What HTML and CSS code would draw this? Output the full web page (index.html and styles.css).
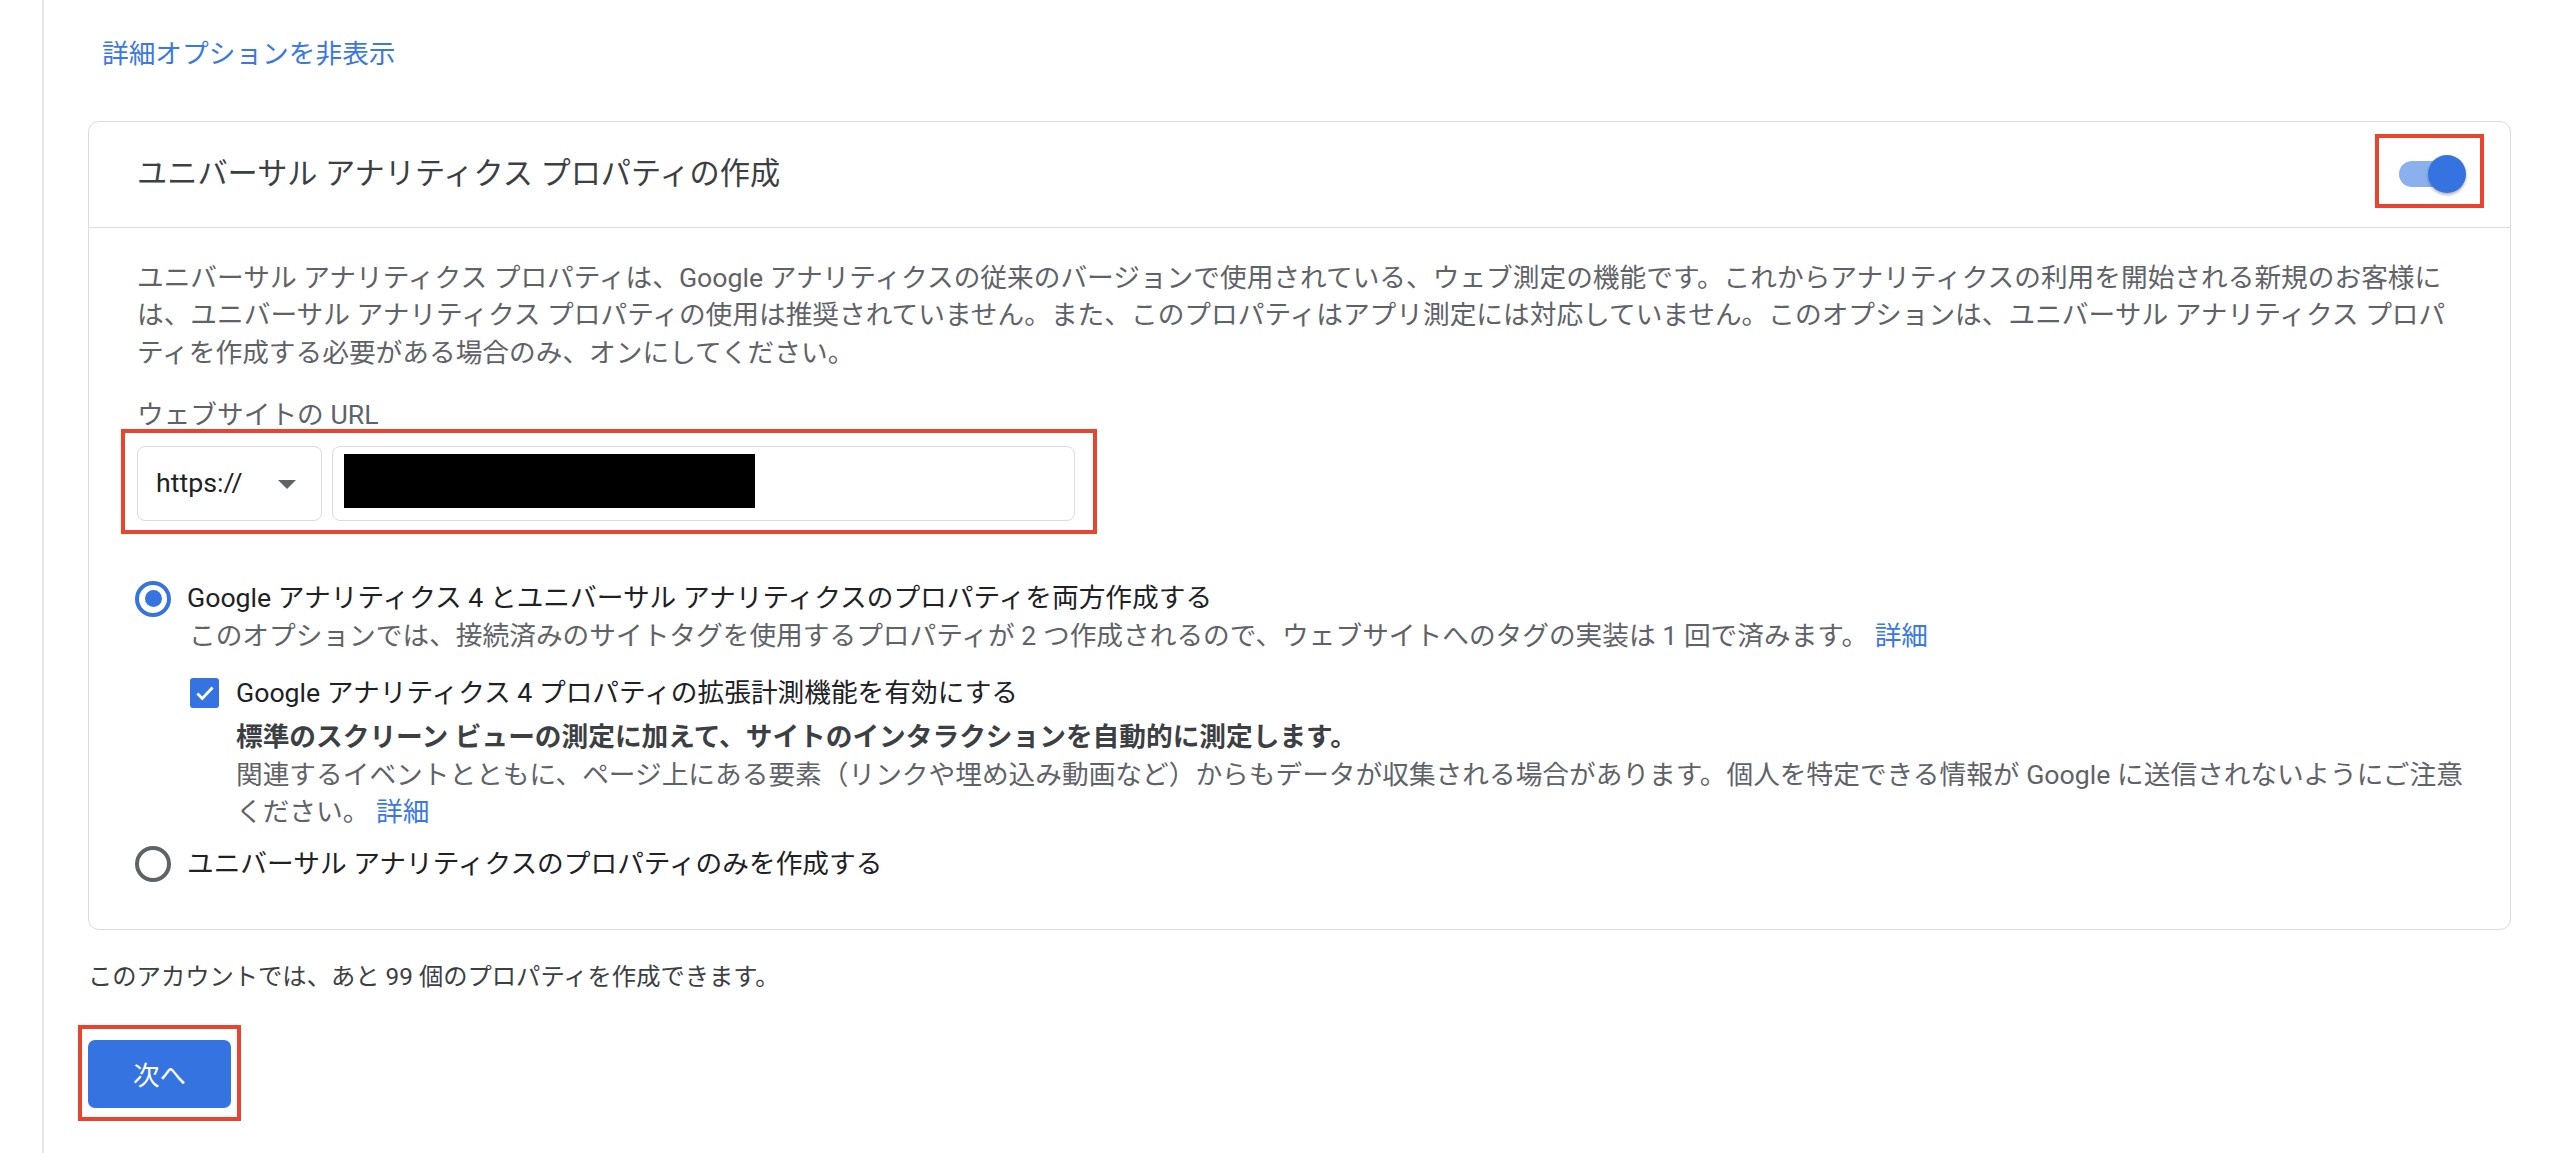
FILE: index.html
```html
<!DOCTYPE html>
<html lang="ja">
<head>
<meta charset="utf-8">
<title>プロパティの作成</title>
<link rel="stylesheet" href="styles.css">
</head>
<body>
<div class="page">
  <div class="toplink"><a class="link">詳細オプションを非表示</a></div>

  <div class="card">
    <div class="card-head">
      <div class="card-title">ユニバーサル アナリティクス プロパティの作成</div>
      <div class="toggle">
        <span class="track"></span><span class="thumb"></span>
        <span class="mark mark-toggle"></span>
      </div>
    </div>
    <div class="card-body">
      <p class="desc">ユニバーサル アナリティクス プロパティは、Google アナリティクスの従来のバージョンで使用されている、ウェブ測定の機能です。これからアナリティクスの利用を開始される新規のお客様に<br>は、ユニバーサル アナリティクス プロパティの使用は推奨されていません。また、このプロパティはアプリ測定には対応していません。このオプションは、ユニバーサル アナリティクス プロパ<br>ティを作成する必要がある場合のみ、オンにしてください。</p>

      <div class="field-label">ウェブサイトの URL</div>
      <div class="url-row">
        <div class="select"><span class="select-text">https://</span><span class="caret"></span></div>
        <div class="input"><span class="redact"></span></div>
        <span class="mark mark-url"></span>
      </div>

      <div class="option opt1">
        <div class="opt-row">
          <span class="radio on"><span class="dot"></span></span>
          <span class="opt-label">Google アナリティクス 4 とユニバーサル アナリティクスのプロパティを両方作成する</span>
        </div>
        <div class="opt-sub">このオプションでは、接続済みのサイトタグを使用するプロパティが 2 つ作成されるので、ウェブサイトへのタグの実装は 1 回で済みます。 <a class="link">詳細</a></div>

        <div class="check-row">
          <span class="checkbox"><svg viewBox="0 0 24 24" width="26" height="26"><path d="M5 12.5l4.5 4.5L19 7" fill="none" stroke="#fff" stroke-width="2.6"/></svg></span>
          <span class="opt-label">Google アナリティクス 4 プロパティの拡張計測機能を有効にする</span>
        </div>
        <div class="check-detail">
          <div class="bold-line">標準のスクリーン ビューの測定に加えて、サイトのインタラクションを自動的に測定します。</div>
          <div class="gray-line">関連するイベントとともに、ページ上にある要素（リンクや埋め込み動画など）からもデータが収集される場合があります。個人を特定できる情報が Google に送信されないようにご注意<br>ください。 <a class="link">詳細</a></div>
        </div>
      </div>

      <div class="opt-row opt2">
        <span class="radio off"></span>
        <span class="opt-label">ユニバーサル アナリティクスのプロパティのみを作成する</span>
      </div>
    </div>
  </div>

  <div class="remaining">このアカウントでは、あと 99 個のプロパティを作成できます。</div>

  <div class="actions">
    <button class="btn">次へ<span class="mark mark-btn"></span></button>
  </div>
</div>
</body>
</html>
```

FILE: styles.css
```css
* { box-sizing: border-box; }
html, body { margin: 0; padding: 0; background: #fff; }
body {
  font-family: Roboto, "Noto Sans CJK JP", sans-serif;
  font-size: 26.7px;
  line-height: 37.5px;
  color: #202124;
}
.page {
  margin-left: 42px;
  border-left: 2px solid #e6e6e6;
  min-height: 1153px;
  padding: 36px 49px 0 44px;
}
.link { color: #3b78e7; cursor: pointer; }
.toplink { padding-left: 14px; height: 37.5px; }

.card {
  margin-top: 47px;
  border: 1.5px solid #dadce0;
  border-radius: 11px;
}
.card-head {
  height: 106px;
  border-bottom: 1.5px solid #dadce0;
  display: flex;
  align-items: center;
  justify-content: space-between;
  padding: 0 44px 0 48px;
}
.card-title { font-size: 30.2px; color: #3c4043; }
.toggle {
  position: relative;
  display: flex;
  align-items: center;
  height: 38px;
}
.track {
  width: 60px; height: 26px; border-radius: 13px;
  background: #8ab0ee;
}
.thumb {
  width: 38px; height: 38px; border-radius: 50%;
  background: #3574e0;
  margin-left: -31px;
  box-shadow: 0 2px 3px rgba(0,0,0,0.3);
}
.mark {
  position: absolute;
  border: 4px solid #e8442e;
  pointer-events: none;
}
.mark-toggle { left: -24px; right: -18px; top: -21px; bottom: -15px; }

.card-body { padding: 32px 48px 46px 48px; }
.desc {
  margin: 0;
  color: #5f6368;
  white-space: nowrap;
}
.field-label {
  margin-top: 28px;
  line-height: 30px;
  color: #5f6368;
}
.url-row {
  position: relative;
  margin-top: 16px;
  display: flex;
  gap: 10px;
  width: 938px;
}
.select {
  width: 185px; height: 75px;
  border: 1.5px solid #dadce0;
  border-radius: 8px;
  display: flex;
  align-items: center;
  padding-left: 18px;
  color: #202124;
}
.select-text { width: 122px; }
.caret {
  width: 0; height: 0;
  border-left: 9px solid transparent;
  border-right: 9px solid transparent;
  border-top: 9px solid #5f6368;
  margin-top: 1px;
}
.input {
  flex: 1;
  height: 75px;
  border: 1.5px solid #dadce0;
  border-radius: 8px;
  padding: 7px 11px;
}
.redact { display: block; width: 411px; height: 54px; background: #000; }
.mark-url { left: -16px; right: -22px; top: -17px; bottom: -13px; }

.opt1 { margin-top: 59px; }
.opt-row { display: flex; align-items: center; }
.radio {
  width: 36px; height: 36px; border-radius: 50%;
  border: 4px solid #3574e0;
  display: flex; align-items: center; justify-content: center;
  flex: none;
  margin-left: -2px;
}
.radio .dot { width: 17px; height: 17px; border-radius: 50%; background: #3574e0; }
.radio.off { border-color: #5f6368; }
.opt-row .opt-label { margin-left: 16px; color: #202124; }
.opt-sub { padding-left: 52px; color: #5f6368; line-height: 36px; white-space: nowrap; }
.check-row {
  display: flex; align-items: center;
  margin-top: 21px;
  padding-left: 53px;
}
.checkbox {
  width: 29px; height: 30px; border-radius: 3px;
  background: #3574e0;
  display: flex; align-items: center; justify-content: center;
  flex: none;
}
.check-row .opt-label { margin-left: 17px; }
.check-detail { padding-left: 99px; margin-top: 7px; white-space: nowrap; }
.bold-line { font-weight: 700; color: #3c4043; }
.gray-line { color: #5f6368; }
.opt2 { margin-top: 14px; }

.remaining {
  margin-top: 28px;
  font-size: 24.3px;
  color: #3c4043;
}
.actions { margin-top: 44px; }
.btn {
  position: relative;
  width: 143px; height: 68px;
  border: none; border-radius: 7px;
  background: #3574e0;
  color: #fff;
  font-family: Roboto, "Noto Sans CJK JP", sans-serif;
  font-size: 26.5px;
  padding: 0;
}
.mark-btn { left: -10px; right: -10px; top: -15px; bottom: -13px; }
```
